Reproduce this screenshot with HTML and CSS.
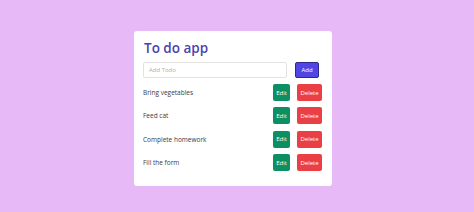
FILE: index.html
```html
<!DOCTYPE html>
<html>
<head>
  <meta charset="UTF-8">
  <meta name="viewport" content="width=device-width, initial-scale=1.0">
  <title>To do app</title>
  <link rel="stylesheet" href="styles.css">
</head>
<body>
  <div class="card">
    <h1 class="title">To do app</h1>
    <div class="add-row">
      <input type="text" class="todo-input" placeholder="Add Todo">
      <button class="btn btn-add">Add</button>
    </div>
    <ul class="todo-list">
      <li class="todo-item">
        <span class="todo-text">Bring vegetables</span>
        <div class="actions">
          <button class="btn btn-edit">Edit</button>
          <button class="btn btn-delete">Delete</button>
        </div>
      </li>
      <li class="todo-item">
        <span class="todo-text">Feed cat</span>
        <div class="actions">
          <button class="btn btn-edit">Edit</button>
          <button class="btn btn-delete">Delete</button>
        </div>
      </li>
      <li class="todo-item">
        <span class="todo-text">Complete homework</span>
        <div class="actions">
          <button class="btn btn-edit">Edit</button>
          <button class="btn btn-delete">Delete</button>
        </div>
      </li>
      <li class="todo-item">
        <span class="todo-text">Fill the form</span>
        <div class="actions">
          <button class="btn btn-edit">Edit</button>
          <button class="btn btn-delete">Delete</button>
        </div>
      </li>
    </ul>
  </div>
</body>
</html>
```

FILE: styles.css
```css
body {
  margin: 0;
  background: #e8b9f7;
  font-family: "Open Sans", Arial, sans-serif;
  height: 212px;
}
.card {
  width: 179px;
  margin-left: 134px;
  margin-top: 31px;
  padding: 8px 10px 15px 9px;
  background: #fff;
  border-radius: 3px;
}
.title {
  margin: 0 0 5px 1px;
  font-size: 13.5px;
  font-weight: 600;
  color: #4a43b0;
  line-height: 18px;
}
.add-row {
  display: flex;
  gap: 8px;
  margin-right: 3px;
}
.todo-input {
  flex: 1;
  height: 16px;
  box-sizing: border-box;
  border: 1px solid #e2e2e2;
  border-radius: 2px;
  padding: 0 5px;
  font-family: inherit;
  font-size: 6px;
  outline: none;
}
.todo-input::placeholder {
  color: #b0b0b0;
}
.btn {
  height: 17px;
  border: none;
  border-radius: 2px;
  color: #fff;
  font-family: inherit;
  font-size: 6px;
  padding: 0 4px;
  cursor: pointer;
}
.btn-add {
  width: 24px;
  height: 16px;
  background: #4f46e5;
  border: 1px solid #2f2a8a;
}
.todo-list {
  list-style: none;
  margin: 6px 0 0;
  padding: 0;
  display: flex;
  flex-direction: column;
  gap: 6.4px;
}
.todo-item {
  display: flex;
  align-items: center;
  justify-content: space-between;
  height: 17px;
}
.todo-text {
  font-size: 6.5px;
  color: #3a3a3a;
}
.actions {
  display: flex;
  gap: 7px;
}
.btn-edit {
  width: 17px;
  padding: 0;
  background: #0b8f63;
}
.btn-delete {
  width: 25px;
  padding: 0;
  background: #ea3f44;
}
```
